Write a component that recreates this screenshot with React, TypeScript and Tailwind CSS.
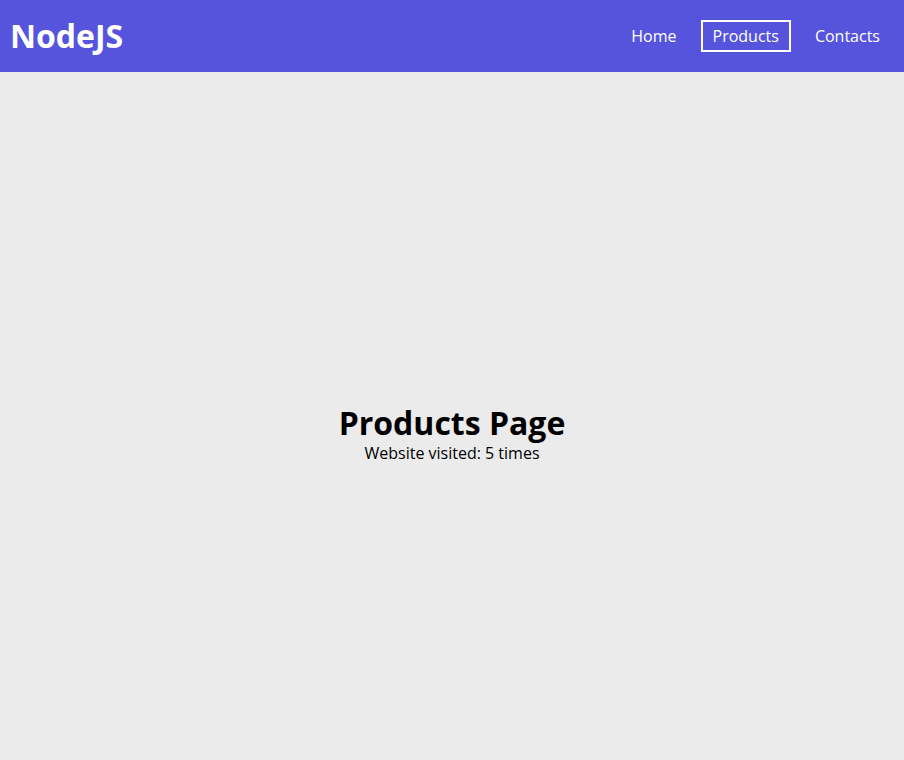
export default function App() {
  return (
    <div className="flex h-screen flex-col bg-[#ebebeb] font-['Open_Sans',sans-serif]">
      <header className="flex h-[72px] items-center justify-between bg-[#5654dd] pl-[10px] pr-[12px] text-white">
        <a href="#" className="text-[32px] font-bold leading-none">
          NodeJS
        </a>
        <nav className="flex items-center gap-[12px] text-[16px]">
          <a href="#" className="px-[12px] py-[4px]">Home</a>
          <a href="#" className="border-2 border-white px-[10px] py-[2px]">Products</a>
          <a href="#" className="px-[12px] py-[4px]">Contacts</a>
        </nav>
      </header>
      <main className="flex flex-1 flex-col items-center justify-center pt-[34px] text-black">
        <h1 className="text-[32px] font-bold leading-[40px]">Products Page</h1>
        <p className="text-[16px] leading-[20px]">Website visited: 5 times</p>
      </main>
    </div>
  );
}
